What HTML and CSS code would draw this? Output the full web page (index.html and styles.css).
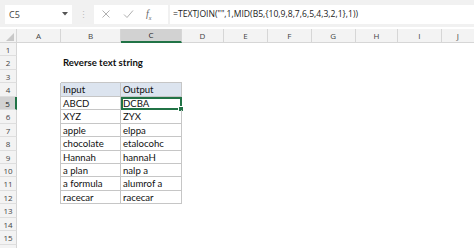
FILE: index.html
```html
<!DOCTYPE html>
<html>
<head>
  <title>Reverse text string</title>
  <link rel="stylesheet" href="styles.css">
</head>
<body>
  <div class="toolbar">
    <div class="name-box">
      <span>C5</span>
      <svg class="caret" width="6" height="4" viewBox="0 0 6 4"><path d="M0 0h6L3 3.5z" fill="#555"/></svg>
    </div>
    <div class="dots">&#8942;</div>
    <div class="fx-box">
      <svg class="ico" width="10" height="10" viewBox="0 0 10 10"><path d="M1.5 1.5l7 7M8.5 1.5l-7 7" stroke="#b0b0b0" stroke-width="1"/></svg>
      <svg class="ico" width="11" height="10" viewBox="0 0 11 10"><path d="M1 5.5l3 3L10 1.5" stroke="#b0b0b0" stroke-width="1" fill="none"/></svg>
      <span class="fx"><i>f</i><sub>x</sub></span>
    </div>
    <div class="formula">=TEXTJOIN("",1,MID(B5,{10,9,8,7,6,5,4,3,2,1},1))</div>
  </div>

  <div class="sheet">
    <div class="cols">
      <div class="corner"><svg width="8" height="8" viewBox="0 0 8 8"><path d="M8 0v8H0z" fill="#c8c8c8"/></svg></div>
      <div class="col">A</div>
      <div class="col">B</div>
      <div class="col sel">C</div>
      <div class="col">D</div>
      <div class="col">E</div>
      <div class="col">F</div>
      <div class="col">G</div>
      <div class="col">H</div>
      <div class="col">I</div>
      <div class="col last">J</div>
    </div>
    <div class="grid" id="grid"></div>
  </div>

  <script>
    const rows = {
      2: { b: 'Reverse text string', title: true },
      4: { b: 'Input', c: 'Output', head: true },
      5: { b: 'ABCD', c: 'DCBA' },
      6: { b: 'XYZ', c: 'ZYX' },
      7: { b: 'apple', c: 'elppa' },
      8: { b: 'chocolate', c: 'etalocohc' },
      9: { b: 'Hannah', c: 'hannaH' },
      10: { b: 'a plan', c: 'nalp a' },
      11: { b: 'a formula', c: 'alumrof a' },
      12: { b: 'racecar', c: 'racecar' }
    };
    const grid = document.querySelector('#grid');

    for (let r = 1; r <= 16; r++) {
      const data = rows[r] || {};
      const num = document.createElement('div');
      num.className = 'rownum' + (r === 5 ? ' sel' : '');
      // row 16 is only a sliver at the bottom edge
      if (r < 16) num.innerText = r;
      grid.appendChild(num);

      for (let c = 0; c < 10; c++) {
        const cell = document.createElement('div');
        cell.className = 'cell';
        if (c === 1 && data.b) cell.innerText = data.b;
        if (c === 2 && data.c) cell.innerText = data.c;
        if (data.title && c === 1) cell.classList.add('title');
        if (r >= 4 && r <= 12 && (c === 1 || c === 2)) {
          cell.classList.add('tbl');
          if (data.head) cell.classList.add('thead');
        }
        if (r === 5 && c === 2) {
          cell.classList.add('active');
          const handle = document.createElement('span');
          handle.className = 'handle';
          cell.appendChild(handle);
        }
        grid.appendChild(cell);
      }
    }
  </script>
</body>
</html>
```

FILE: styles.css
```css
body {
  margin: 0;
  width: 474px;
  height: 248px;
  overflow: hidden;
  background: #fff;
  font-family: "Lato", "Liberation Sans", sans-serif;
}

.toolbar {
  display: flex;
  align-items: center;
  height: 29px;
  padding-top: 1px;
  box-sizing: border-box;
  background: #f1f1f1;
  border-bottom: 2px solid #fff;
  font-family: "Open Sans", "Liberation Sans", sans-serif;
  color: #333;
}

.name-box {
  display: flex;
  align-items: center;
  justify-content: space-between;
  margin-left: 5px;
  width: 67px;
  height: 19px;
  padding: 0 4px 0 4px;
  box-sizing: border-box;
  background: #fff;
  font-size: 9px;
  color: #444;
}

.dots {
  width: 22px;
  text-align: center;
  font-size: 9px;
  color: #bbb;
}

.fx-box {
  display: flex;
  align-items: center;
  width: 74px;
  height: 19px;
  background: #fff;
  padding-left: 7px;
  box-sizing: border-box;
  gap: 12px;
}

.ico {
  display: block;
}

.fx {
  font-family: "Liberation Serif", serif;
  font-size: 10px;
  color: #666;
}

.fx sub {
  font-size: 6px;
  font-style: italic;
}

.formula {
  flex: 1;
  height: 19px;
  line-height: 19px;
  margin-left: 2px;
  padding-left: 3px;
  background: #fff;
  font-size: 8.6px;
  color: #222;
  white-space: nowrap;
}

.cols,
.grid {
  display: grid;
  grid-template-columns: 17px 44px 60px 61px 42px 44px 43.7px 44px 42.3px 43.7px 32.3px;
}

.cols {
  height: 13px;
  background: #f3f3f3;
  border-bottom: 1px solid #d6d6d6;
  font-family: "Open Sans", "Liberation Sans", sans-serif;
}

.corner {
  display: flex;
  align-items: flex-end;
  justify-content: flex-end;
  padding: 0 2px 2px 0;
  border-right: 1px solid #d6d6d6;
}

.col {
  text-align: center;
  font-size: 8px;
  line-height: 13px;
  color: #444;
  border-right: 1px solid #d6d6d6;
}

.col.last {
  border-right: none;
}

.col.sel {
  background: #d2d2d2;
  border-bottom: 2px solid #217346;
  line-height: 12px;
  color: #222;
}

.grid {
  grid-auto-rows: 13.45px;
}

.rownum {
  background: #f3f3f3;
  border-right: 1px solid #d6d6d6;
  border-bottom: 1px solid #dedede;
  box-sizing: border-box;
  text-align: center;
  font-family: "Open Sans", "Liberation Sans", sans-serif;
  font-size: 8px;
  line-height: 13px;
  color: #444;
}

.rownum.sel {
  background: #d2d2d2;
  border-right: 2px solid #217346;
  color: #222;
}

.cell {
  position: relative;
  padding-left: 2px;
  font-size: 9.6px;
  line-height: 13px;
  color: #111;
  white-space: nowrap;
}

.cell.title {
  font-weight: bold;
  overflow: visible;
}

.cell.tbl {
  box-shadow: inset -1px -1px 0 #c6c6c6, -1px 0 0 #c6c6c6;
}

.cell.thead {
  background: #dce4ef;
  box-shadow: inset -1px -1px 0 #c6c6c6, -1px 0 0 #c6c6c6, 0 -1px 0 #c6c6c6;
}

.cell.active {
  box-shadow: inset 0 0 0 2px #217346;
}

.handle {
  position: absolute;
  right: -2px;
  bottom: -2px;
  width: 4px;
  height: 4px;
  background: #217346;
  border: 1px solid #fff;
}
```
